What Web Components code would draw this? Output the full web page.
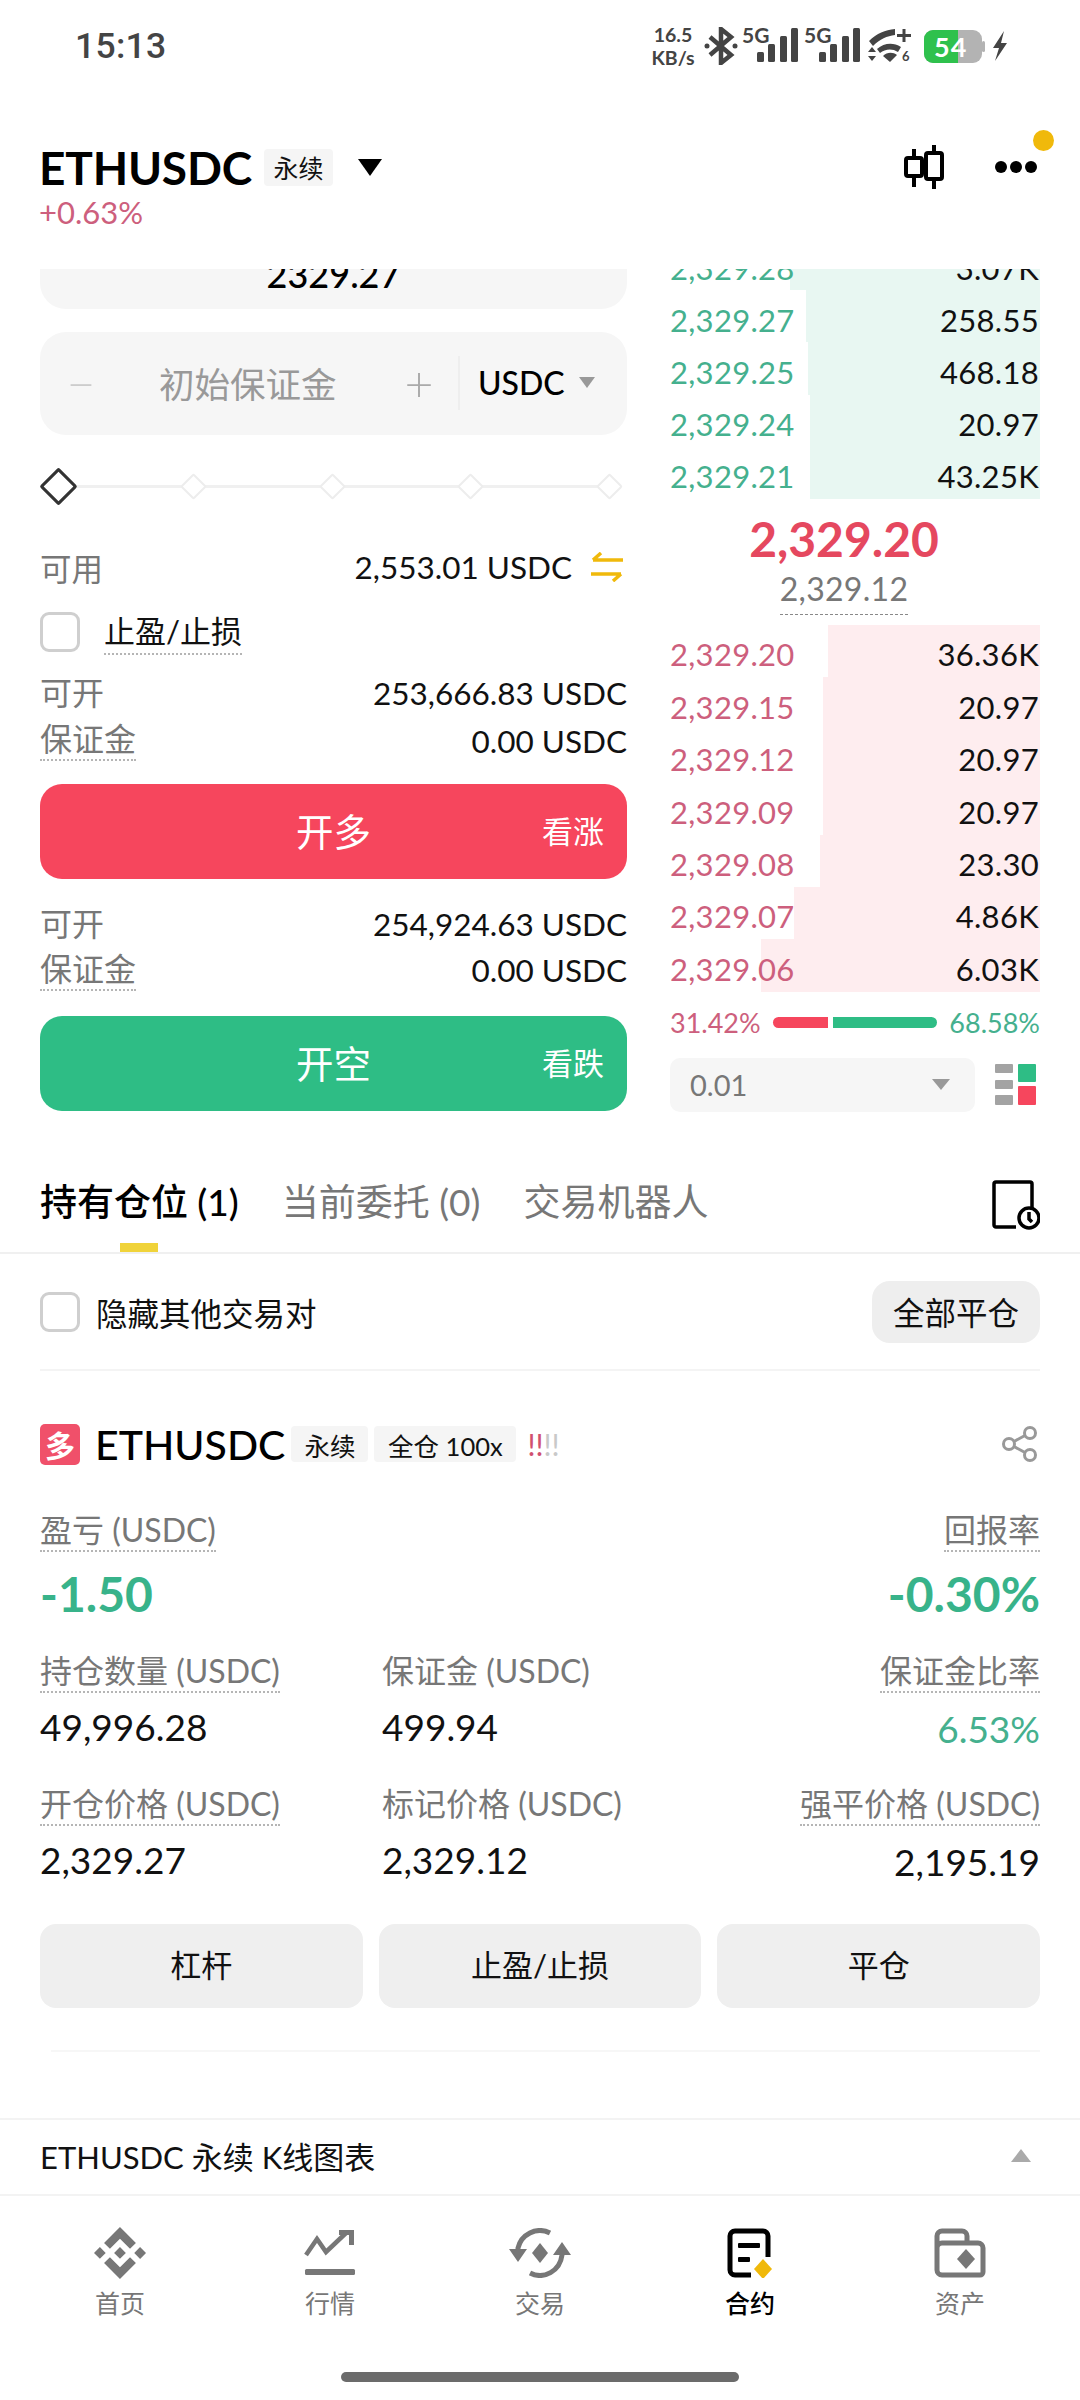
<!DOCTYPE html>
<html lang="zh">
<head>
<meta charset="utf-8">
<title>ETHUSDC</title>
<style>
  html, body { margin: 0; padding: 0; background: #fff; }
  body {
    width: 1080px; height: 2400px; overflow: hidden;
    font-family: Lato, "Noto Sans CJK SC", sans-serif;
    color: #000;
    --green: #2ebd85; --green-text: #45b08e; --red: #f6465d; --red-text: #cd5f7d;
    --grey: #777; --soft: #f5f5f5;
  }
</style>
</head>
<body>
<status-bar></status-bar>
<market-header></market-header>

<trade-panel>
  <order-form slot="form"></order-form>
  <order-book slot="book"></order-book>
</trade-panel>

<position-tabs></position-tabs>
<hide-row></hide-row>

<position-card>
  <stat-cell slot="a" label="盈亏 (USDC)" value="-1.50" tone="green" big></stat-cell>
  <stat-cell slot="c" label="回报率" value="-0.30%" tone="green" big right></stat-cell>
  <stat-cell slot="d" label="持仓数量 (USDC)" value="49,996.28"></stat-cell>
  <stat-cell slot="e" label="保证金 (USDC)" value="499.94" plain></stat-cell>
  <stat-cell slot="f" label="保证金比率" value="6.53%" tone="green" right></stat-cell>
  <stat-cell slot="g" label="开仓价格 (USDC)" value="2,329.27"></stat-cell>
  <stat-cell slot="h" label="标记价格 (USDC)" value="2,329.12" plain></stat-cell>
  <stat-cell slot="i" label="强平价格 (USDC)" value="2,195.19" right></stat-cell>
</position-card>

<chart-bar></chart-bar>

<bottom-nav>
  <nav-item label="首页">
    <svg width="52" height="52" viewBox="0 0 24 24" fill="#777"><path d="M16.624 13.9202l2.7175 2.7154-7.353 7.353-7.353-7.352 2.7175-2.7164 4.6355 4.6595 4.6356-4.6595zm4.6366-4.6366L24 12l-2.7154 2.7164L18.5682 12l2.6924-2.7164zm-9.272.001l2.7163 2.6914-2.7164 2.7174v-.001L9.2721 12l2.7164-2.7154zm-9.2722-.001L5.4088 12l-2.6914 2.6924L0 12l2.7164-2.7164zM11.9885.0115l7.353 7.329-2.7174 2.7154-4.6356-4.6356-4.6355 4.6595-2.7174-2.7154 7.353-7.353z"/></svg>
  </nav-item>
  <nav-item label="行情">
    <svg width="52" height="50" viewBox="0 0 52 50"><path d="M2 27L13 11l9 13L42 5" fill="none" stroke="#777" stroke-width="4.500"/><path d="M35 2h15v15h-5V7H35z" fill="#777"/><rect x="1" y="41" width="50" height="6" rx="1.5" fill="#777"/></svg>
  </nav-item>
  <nav-item label="交易">
    <svg width="64" height="50" viewBox="0 0 64 50"><path d="M32 15l8 10-8 10-8-10z" fill="#777"/><path d="M42 5C28-2 13 7 10 20v6M22 45c14 7 30-2 32-18v-7" fill="none" stroke="#777" stroke-width="5"/><path d="M1 21h18l-9 13zM45 27h18l-9-13z" fill="#777"/></svg>
  </nav-item>
  <nav-item label="合约" active>
    <svg width="46" height="50" viewBox="0 0 46 50"><path d="M24 47H8a5 5 0 0 1-5-5V8a5 5 0 0 1 5-5h28a5 5 0 0 1 5 5v21" fill="none" stroke="#000" stroke-width="5"/><rect x="11" y="15" width="22" height="5" rx="1" fill="#000"/><rect x="11" y="29" width="12" height="5" rx="1" fill="#000"/><path d="M36 31l9 10-9 10-9-10z" fill="#f0b90b"/></svg>
  </nav-item>
  <nav-item label="资产">
    <svg width="52" height="50" viewBox="0 0 52 50"><path d="M3 22V8a5 5 0 0 1 5-5h20a5 5 0 0 1 5 5v6M3 20a5 5 0 0 1 5-5h36a5 5 0 0 1 5 5v24a3 3 0 0 1-3 3H8a5 5 0 0 1-5-5z" fill="none" stroke="#777" stroke-width="5"/><path d="M32 21l9 10-9 10-9-10z" fill="#777"/></svg>
  </nav-item>
</bottom-nav>

<script>
// every element clones its own template into an open shadow root
function tpl(html) {
  var t = document.createElement("template");
  t.innerHTML = html;
  return t;
}

class Base extends HTMLElement {
  constructor() {
    super();
    this.attachShadow({ mode: "open" });
    this.shadowRoot.appendChild(this.constructor.template.content.cloneNode(true));
  }
  $(sel) { return this.shadowRoot.querySelector(sel); }
}

/* ---------- small leaf elements ---------- */

class DotLabel extends Base {}
DotLabel.template = tpl(`
<style>
  :host { display: inline-block; padding-bottom: 3px; border-bottom: 2px dotted #b5b5b5; line-height: 34px; }
</style><slot></slot>`);
customElements.define("dot-label", DotLabel);

class TagChip extends Base {}
TagChip.template = tpl(`
<style>
  :host { display: inline-flex; align-items: center; justify-content: center; height: 36px; padding: 0 10px; background: #f5f5f5; border-radius: 4px; font-size: 25.500px; color: #111; white-space: nowrap; }
</style><slot></slot>`);
customElements.define("tag-chip", TagChip);

class CheckBox extends Base {}
CheckBox.template = tpl(`
<style>
  :host { display: block; width: 40px; height: 40px; box-sizing: border-box; border: 3px solid #cfcfcf; border-radius: 9px; flex: none; }
</style>`);
customElements.define("check-box", CheckBox);

/* ---------- status bar ---------- */

class SignalMark extends Base {}
SignalMark.template = tpl(`
<style>
  :host { display: block; position: relative; width: 54px; height: 37px; }
  span { position: absolute; left: -1px; top: -3px; font-size: 21px; font-weight: 700; line-height: 20px; color: #444; }
  svg { position: absolute; left: 14px; top: 0; }
</style>
<span>5G</span>
<svg width="41" height="34" viewBox="0 0 41 34" fill="#444"><rect x="0" y="24" width="7" height="10" rx="1.5"/><rect x="11" y="16" width="7" height="18" rx="1.5"/><rect x="23" y="8" width="7" height="26" rx="1.5"/><rect x="34" y="0" width="7" height="34" rx="1.5"/></svg>`);
customElements.define("signal-mark", SignalMark);

class StatusBar extends Base {}
StatusBar.template = tpl(`
<style>
  :host { display: flex; align-items: center; height: 92px; box-sizing: border-box; padding: 0 72px 0 75px; color: #444; }
  .time { font-size: 35.500px; font-weight: 500; font-family: Roboto, sans-serif; letter-spacing: .3px; }
  .right { margin-left: auto; display: flex; align-items: center; }
  .speed { width: 44px; text-align: center; font-size: 19.500px; font-weight: 700; line-height: 23px; white-space: nowrap; margin-right: 9px; }
  .batt { position: relative; width: 62px; height: 33px; margin: 0 6px 0 12px; }
  .batt b { position: absolute; left: 10px; top: 0; line-height: 33px; font-size: 27px; font-weight: 700; color: #fff; letter-spacing: 1px; }
  .six { overflow: visible; margin-left: 9px; }
</style>
<div class="time">15:13</div>
<div class="right">
  <div class="speed">16.5<br>KB/s</div>
  <svg width="34" height="38" viewBox="0 0 34 38" fill="none" stroke="#444" stroke-width="4.5" style="margin-right:5px"><path d="M6 10l21 18-10 8V2l10 8L6 28"/><circle cx="3" cy="19" r="2.5" fill="#444" stroke="none"/><circle cx="31" cy="19" r="2.5" fill="#444" stroke="none"/></svg>
  <signal-mark></signal-mark>
  <signal-mark style="margin-left:8px"></signal-mark>
  <svg class="six" width="44" height="36" viewBox="0 0 44 36" fill="#444"><path d="M1 13C9 5 17 2 27 1v6C19 8 12 11 5 18z"/><path d="M9 21c7-6 16-7 24-2l-3 5c-6-4-13-3-18 1z"/><path d="M15 28c4-4 10-4 14-1l-7 7z"/><path d="M29 6h14v3H29zM34.500 1h3v13h-3z"/><path d="M0 24h8l-4-5zM0 28h8l-4 5z"/><text x="34" y="33" font-size="13" font-weight="700" font-family="Lato, sans-serif">6</text></svg>
  <div class="batt">
    <svg width="62" height="33" viewBox="0 0 62 33"><rect x="0" y="0" width="58" height="33" rx="9" fill="#b3b3b3"/><path d="M9 0h25v33H9a9 9 0 0 1-9-9V9a9 9 0 0 1 9-9z" fill="#2fc14d"/><rect x="58" y="11" width="3" height="11" rx="1.5" fill="#b3b3b3"/></svg>
    <b>54</b>
  </div>
  <svg width="16" height="30" viewBox="0 0 16 30" fill="#444"><path d="M12 0L1 17h6L3 30l12-18H9z"/></svg>
</div>`);
customElements.define("status-bar", StatusBar);

/* ---------- market header ---------- */

class MarketHeader extends Base {}
MarketHeader.template = tpl(`
<style>
  :host { display: block; height: 177px; box-sizing: border-box; padding: 50px 39px 0; position: relative; }
  .top { display: flex; align-items: center; height: 50px; }
  h1 { margin: 0; font-size: 46px; font-weight: 700; letter-spacing: -.2px; }
  tag-chip { margin-left: 12px; width: 69px; height: 37px; padding: 0; box-sizing: border-box; font-size: 25px; }
  .caret { margin-left: 25px; width: 0; height: 0; border-left: 12px solid transparent; border-right: 12px solid transparent; border-top: 17px solid #000; }
  .icons { margin-left: auto; display: flex; align-items: center; gap: 49px; margin-right: 3px; }
  .chg { margin-top: 3px; font-size: 31px; line-height: 34px; color: var(--red-text); }
  .dot { position: absolute; left: 1033px; top: 38px; width: 21px; height: 21px; border-radius: 50%; background: #f0b90b; }
</style>
<div class="top">
  <h1>ETHUSDC</h1><tag-chip>永续</tag-chip><span class="caret"></span>
  <div class="icons">
    <svg width="42" height="44" viewBox="0 0 42 44" fill="none" stroke="#000" stroke-width="4"><path d="M11 4v38M31 0v44"/><rect x="3" y="13" width="16" height="18" rx="2" fill="#fff"/><rect x="23" y="8" width="16" height="26" rx="2" fill="#fff"/></svg>
    <svg width="44" height="14" viewBox="0 0 44 14" fill="#000"><circle cx="7" cy="7" r="6"/><circle cx="22" cy="7" r="6"/><circle cx="37" cy="7" r="6"/></svg>
  </div>
</div>
<div class="chg">+0.63%</div>
<div class="dot"></div>`);
customElements.define("market-header", MarketHeader);

/* ---------- trade panel ---------- */

class TradePanel extends Base {}
TradePanel.template = tpl(`
<style>
  :host { display: flex; height: 871px; overflow: hidden; box-sizing: border-box; padding: 0 40px; gap: 41px; }
  ::slotted([slot=form]) { width: 587px; flex: none; }
  ::slotted([slot=book]) { width: 372px; flex: none; }
</style>
<slot name="form"></slot><slot name="book"></slot>`);
customElements.define("trade-panel", TradePanel);

class FormRow extends Base {
  connectedCallback() {
    var lab = this.getAttribute("label");
    this.$(".l").innerHTML = this.hasAttribute("dotted") ? "<dot-label>" + lab + "</dot-label>" : lab;
    this.$(".v").textContent = this.getAttribute("value");
  }
}
FormRow.template = tpl(`
<style>
  :host { display: flex; align-items: center; justify-content: space-between; height: 38px; font-size: 31.500px; white-space: nowrap; }
  .l { color: var(--grey); line-height: 38px; font-size: 32px; }
  .v { color: #111; }
  dot-label { margin-top: 2px; }
</style>
<div class="l"></div><div class="v"></div><slot></slot>`);
customElements.define("form-row", FormRow);

class ActionButton extends Base {
  connectedCallback() {
    this.$(".m").textContent = this.getAttribute("main");
    this.$(".s").textContent = this.getAttribute("side");
    this.style.setProperty("--bg", this.getAttribute("color"));
  }
}
ActionButton.template = tpl(`
<style>
  :host { display: grid; grid-template-columns: 1fr auto 1fr; align-items: center; height: 95px; box-sizing: border-box; border-radius: 22px; background: var(--bg); color: #fff; padding: 0 23px 5px; }
  .m { grid-column: 2; font-size: 37.500px; }
  .s { grid-column: 3; justify-self: end; font-size: 31px; }
</style>
<div class="m"></div><div class="s"></div>`);
customElements.define("action-button", ActionButton);

class LeverSlider extends Base {}
LeverSlider.template = tpl(`
<style>
  :host { display: flex; align-items: center; height: 40px; }
  i { display: block; flex: 1; height: 3px; background: #f0f0f0; margin: 0 -2px; }
  i.short { flex: .9; }
  b { display: block; flex: none; width: 15px; height: 15px; transform: rotate(45deg); margin: 0 3px; background: #fff; border: 2px solid #ededed; border-radius: 2px; }
  b.on { width: 21px; height: 21px; margin: 0 7px 0 5px; border: 3.5px solid #333; border-radius: 2px; }
  b:last-child { margin-right: 8px; }
</style>
<b class="on"></b><i class="short"></i><b></b><i></i><b></b><i></i><b></b><i></i><b></b>`);
customElements.define("lever-slider", LeverSlider);

class OrderForm extends Base {}
OrderForm.template = tpl(`
<style>
  :host { display: block; }
  .box { background: #f6f6f6; border-radius: 26px; }
  .price { height: 100px; margin-top: -60px; box-sizing: border-box; padding-bottom: 17px; display: flex; align-items: flex-end; justify-content: center; font-size: 36px; line-height: 36px; font-weight: 500; }
  .margin { margin-top: 23px; height: 103px; box-sizing: border-box; padding-bottom: 2px; display: flex; align-items: center; }
  .margin .sign { width: 40px; text-align: center; color: #aaa; font-size: 50px; font-weight: 300; line-height: 44px; }
  .margin .minus { margin-left: 21px; color: #ccc; }
  .margin .ph { width: 178px; margin-left: 58px; font-size: 35.500px; color: #999; white-space: nowrap; }
  .margin .plus { margin-left: 62px; }
  .margin .sep { width: 2px; height: 54px; background: #eeeeee; margin: 0 18px 0 19px; }
  .margin .unit { font-size: 32px; font-weight: 500; }
  .margin .dn { margin-left: 14px; border-left: 8px solid transparent; border-right: 8px solid transparent; border-top: 11px solid #999; }
  lever-slider { margin-top: 31px; }
  .avail { margin-top: 41px; height: 40px; }
  .avail svg { margin: 0 3px 0 18px; }
  .avail .val { display: flex; align-items: center; color: #111; }
  .tp { display: flex; align-items: center; gap: 24px; margin-top: 21px; font-size: 31px; color: #111; }
  .tp dot-label { line-height: 38px; margin-top: 4px; }
  form-row.first { margin-top: 19px; }
  form-row.first.next { margin-top: 25.500px; }
  form-row.second { margin-top: 9.500px; }
  form-row.second.next { margin-top: 8.500px; }
  action-button { margin-top: 24.500px; }
  action-button.next { margin-top: 27px; }
  .row { display: flex; justify-content: space-between; align-items: center; font-size: 31.500px; white-space: nowrap; }
  .row .lab { color: var(--grey); }
</style>
<div class="box price">2329.27</div>
<div class="box margin">
  <span class="sign minus">−</span>
  <span class="ph">初始保证金</span>
  <span class="sign plus">+</span>
  <span class="sep"></span>
  <span class="unit">USDC</span>
  <span class="dn"></span>
</div>
<lever-slider></lever-slider>
<div class="row avail">
  <span class="lab">可用</span>
  <span class="val">2,553.01 USDC
    <svg width="34" height="30" viewBox="0 0 34 30" fill="none" stroke="#f0b90b" stroke-width="3.5"><path d="M33 8H3M11 1L3 8M1 22h30M23 29l8-7"/></svg>
  </span>
</div>
<div class="tp"><check-box></check-box><dot-label>止盈/止损</dot-label></div>
<form-row class="first" label="可开" value="253,666.83 USDC"></form-row>
<form-row class="second" label="保证金" value="0.00 USDC" dotted></form-row>
<action-button main="开多" side="看涨" color="#f6465d"></action-button>
<form-row class="first next" label="可开" value="254,924.63 USDC"></form-row>
<form-row class="second next" label="保证金" value="0.00 USDC" dotted></form-row>
<action-button class="next" main="开空" side="看跌" color="#2ebd85"></action-button>`);
customElements.define("order-form", OrderForm);

class BookRow extends Base {
  connectedCallback() {
    var side = this.getAttribute("side");
    this.$(".p").textContent = this.getAttribute("price");
    this.$(".q").textContent = this.getAttribute("qty");
    this.style.setProperty("--from", this.getAttribute("from") + "px");
    this.style.setProperty("--c", side == "ask" ? "#feedef" : "#e8f7f2");
    this.style.setProperty("--t", side == "ask" ? "var(--red-text)" : "var(--green-text)");
  }
}
BookRow.template = tpl(`
<style>
  :host { display: flex; justify-content: space-between; box-sizing: border-box; height: var(--rh, 52px); padding: 10.500px 1px 0 2px; font-size: 31px; line-height: 38px; background: linear-gradient(to right, transparent var(--from), var(--c) var(--from)); letter-spacing: .3px; }
  .p { color: var(--t); }
  .q { color: #111; }
</style>
<span class="p"></span><span class="q"></span>`);
customElements.define("book-row", BookRow);

class OrderBook extends Base {}
OrderBook.template = tpl(`
<style>
  :host { display: block; }
  .bids { margin-top: -31px; --rh: 52.200px; }
  .asks { --rh: 52.400px; }
  .mid { height: 126px; box-sizing: border-box; padding: 17px 20px 0 0; display: flex; flex-direction: column; align-items: center; }
  .last { font-size: 48px; line-height: 46px; font-weight: 700; color: #e5485f; }
  .mark { margin-top: 10px; font-size: 32px; line-height: 34px; color: #777; padding-bottom: 8px; border-bottom: 1px dashed #888; letter-spacing: .3px; }
  .ratio { margin-top: 9px; height: 44px; display: flex; align-items: center; font-size: 27px; padding: 0 0 0 2px; }
  .ratio .a { color: var(--red-text); }
  .ratio .b { color: var(--green-text); }
  .bar { margin: 0 12px; flex: 1; display: flex; gap: 5px; height: 11px; }
  .bar i { display: block; }
  .bar .r { width: 55px; background: var(--red); border-radius: 6px 0 0 6px; }
  .bar .g { flex: 1; background: var(--green); border-radius: 0 6px 6px 0; }
  .tick { margin-top: 13px; display: flex; align-items: center; justify-content: space-between; padding: 0 3px 0 2px; }
  .sel { width: 305px; height: 54px; box-sizing: border-box; padding: 0 25px 0 20px; background: #f6f6f6; border-radius: 10px; display: flex; align-items: center; justify-content: space-between; font-size: 29px; color: #777; }
  .sel i { border-left: 9px solid transparent; border-right: 9px solid transparent; border-top: 11px solid #999; }
</style>
<div class="bids">
  <book-row side="bid" price="2,329.28" qty="3.07K" from="122"></book-row>
  <book-row side="bid" price="2,329.27" qty="258.55" from="138"></book-row>
  <book-row side="bid" price="2,329.25" qty="468.18" from="140"></book-row>
  <book-row side="bid" price="2,329.24" qty="20.97" from="142"></book-row>
  <book-row side="bid" price="2,329.21" qty="43.25K" from="142"></book-row>
</div>
<div class="mid">
  <div class="last">2,329.20</div>
  <div class="mark">2,329.12</div>
</div>
<div class="asks">
  <book-row side="ask" price="2,329.20" qty="36.36K" from="160"></book-row>
  <book-row side="ask" price="2,329.15" qty="20.97" from="155"></book-row>
  <book-row side="ask" price="2,329.12" qty="20.97" from="155"></book-row>
  <book-row side="ask" price="2,329.09" qty="20.97" from="155"></book-row>
  <book-row side="ask" price="2,329.08" qty="23.30" from="152"></book-row>
  <book-row side="ask" price="2,329.07" qty="4.86K" from="126"></book-row>
  <book-row side="ask" price="2,329.06" qty="6.03K" from="93"></book-row>
</div>
<div class="ratio"><span class="a">31.42%</span><div class="bar"><i class="r"></i><i class="g"></i></div><span class="b">68.58%</span></div>
<div class="tick">
  <div class="sel"><span>0.01</span><i></i></div>
  <svg width="42" height="42" viewBox="0 0 42 42"><g fill="#a3a3a3"><rect x="0" y="0" width="18" height="9" rx="1"/><rect x="0" y="16" width="18" height="9" rx="1"/><rect x="0" y="31" width="18" height="10" rx="1"/></g><rect x="23" y="0" width="18" height="18" rx="1" fill="#2ebd85"/><rect x="23" y="22" width="18" height="19" rx="1" fill="#f6465d"/></svg>
</div>`);
customElements.define("order-book", OrderBook);

/* ---------- tabs + filter ---------- */

class PositionTabs extends Base {}
PositionTabs.template = tpl(`
<style>
  :host { display: flex; height: 114px; box-sizing: border-box; padding: 41px 40px 0; align-items: flex-start; border-bottom: 2px solid #f0f0f0; gap: 43px; }
  .t { position: relative; font-size: 37px; line-height: 42px; color: var(--grey); height: 71px; white-space: nowrap; }
  .t.on { color: #000; font-weight: 500; }
  .t.on::after { content: ""; position: absolute; left: 50%; margin-left: -19px; bottom: 0; width: 38px; height: 9px; background: #f0d33a; }
  svg { margin: -1px 0 0 auto; flex: none; }
</style>
<div class="t on">持有仓位 (1)</div>
<div class="t">当前委托 (0)</div>
<div class="t">交易机器人</div>
<svg width="48" height="50" viewBox="0 0 48 50" fill="none" stroke="#000" stroke-width="3.500"><path d="M24 47H4a2 2 0 0 1-2-2V4a2 2 0 0 1 2-2h34a2 2 0 0 1 2 2v26"/><circle cx="37" cy="38" r="10"/><path d="M37 32v7l3 3"/></svg>`);
customElements.define("position-tabs", PositionTabs);

class HideRow extends Base {}
HideRow.template = tpl(`
<style>
  :host { display: block; padding: 0 40px; }
  .in { display: flex; align-items: center; height: 117px; box-sizing: border-box; padding-top: 28px; padding-bottom: 27px; border-bottom: 2px solid #f4f4f4; font-size: 31.500px; color: #111; }
  span { margin-left: 16px; }
  button { margin-left: auto; width: 168px; height: 62px; border: 0; border-radius: 18px; background: #eeeeee; font: inherit; color: #111; padding: 0 0 3px; }
</style>
<div class="in"><check-box></check-box><span>隐藏其他交易对</span><button>全部平仓</button></div>`);
customElements.define("hide-row", HideRow);

/* ---------- position card ---------- */

class StatCell extends Base {
  connectedCallback() {
    this.$(".l").textContent = this.getAttribute("label");
    this.$(".v").textContent = this.getAttribute("value");
    if (this.getAttribute("tone") == "green") this.$(".v").classList.add("g");
    if (this.hasAttribute("big")) this.$(".v").classList.add("big");
    if (this.hasAttribute("right")) this.classList.add("right");
    if (this.hasAttribute("plain")) this.$(".l").classList.add("plain");
  }
}
StatCell.template = tpl(`
<style>
  :host { display: flex; flex-direction: column; align-items: flex-start; font-size: 32px; }
  :host(.right) { align-items: flex-end; }
  :host(.right) .v { margin-top: 13px; }
  .l { color: var(--grey); white-space: nowrap; }
  .l.plain { border-bottom-color: transparent; }
  .v { margin-top: 11px; font-size: 37px; line-height: 46px; color: #111; white-space: nowrap; }
  .v.g { color: var(--green-text); }
  :host(.right) .v.big, .v.big { margin-top: 17px; font-size: 48px; line-height: 50px; font-weight: 700; color: #38b38a; }
</style>
<dot-label class="l"></dot-label><div class="v"></div>`);
customElements.define("stat-cell", StatCell);

class PositionCard extends Base {}
PositionCard.template = tpl(`
<style>
  :host { display: block; padding: 0 40px; }
  .head { display: flex; align-items: center; height: 42px; margin-top: 52px; }
  .side { width: 40px; height: 41px; border-radius: 5px; background: #f0506a; color: #fff; font-size: 30px; font-weight: 700; display: flex; align-items: center; justify-content: center; flex: none; }
  .name { margin-left: 15px; font-size: 41px; font-weight: 500; }
  tag-chip { margin-left: 6px; }
  .warn { margin-left: 11px; font-size: 30px; font-weight: 400; color: #c9c9c9; }
  .warn b { color: #d0506f; font-weight: 400; }
  .share { margin-left: auto; margin-right: 2px; }
  .grid { margin-top: 48px; display: grid; grid-template-columns: 342px 1fr auto; row-gap: 35px; }
  .btns { margin-top: 38.500px; display: flex; gap: 16px; }
  .btns div { flex: 1; height: 84px; box-sizing: border-box; padding-bottom: 4px; background: #efefef; border-radius: 16px; display: flex; align-items: center; justify-content: center; font-size: 31px; color: #111; }
  .rule { margin: 42px 0 0 11px; height: 2px; background: #f7f7f7; }
</style>
<div class="head">
  <div class="side">多</div>
  <div class="name">ETHUSDC</div>
  <tag-chip style="width:77px;padding:0;box-sizing:border-box">永续</tag-chip>
  <tag-chip style="width:142px;padding:0;box-sizing:border-box">全仓 100x</tag-chip>
  <div class="warn"><b>!!</b>!!</div>
  <svg class="share" width="36" height="36" viewBox="0 0 36 36" fill="none" stroke="#999" stroke-width="3"><circle cx="28" cy="7" r="5.500"/><circle cx="7" cy="18" r="5.500"/><circle cx="28" cy="29" r="5.500"/><path d="M12 15.500l11-6M12 20.500l11 6"/></svg>
</div>
<div class="grid">
  <slot name="a"></slot><div></div><slot name="c"></slot>
  <slot name="d"></slot><slot name="e"></slot><slot name="f"></slot>
  <slot name="g"></slot><slot name="h"></slot><slot name="i"></slot>
</div>
<div class="btns"><div>杠杆</div><div>止盈/止损</div><div>平仓</div></div>
<div class="rule"></div>`);
customElements.define("position-card", PositionCard);

/* ---------- footer ---------- */

class ChartBar extends Base {}
ChartBar.template = tpl(`
<style>
  :host { display: flex; align-items: center; justify-content: space-between; height: 78px; margin-top: 66px; box-sizing: border-box; padding: 0 40px 3px; border-top: 2px solid #f3f3f3; border-bottom: 2px solid #f3f3f3; font-size: 31px; color: #111; }
  i { margin-right: 9px; border-left: 10px solid transparent; border-right: 10px solid transparent; border-bottom: 13px solid #aaa; }
</style>
<span>ETHUSDC 永续 K线图表</span><i></i>`);
customElements.define("chart-bar", ChartBar);

class NavItem extends Base {
  connectedCallback() {
    this.$("span").textContent = this.getAttribute("label");
    if (this.hasAttribute("active")) this.$("span").classList.add("on");
  }
}
NavItem.template = tpl(`
<style>
  :host { display: flex; flex-direction: column; align-items: center; width: 210px; }
  .ic { height: 52px; display: flex; align-items: center; justify-content: center; }
  span { margin-top: 7px; font-size: 25px; line-height: 34px; color: var(--grey); }
  span.on { color: #000; font-weight: 500; }
</style>
<div class="ic"><slot></slot></div><span></span>`);
customElements.define("nav-item", NavItem);

class BottomNav extends Base {}
BottomNav.template = tpl(`
<style>
  :host { display: block; }
  .items { display: flex; justify-content: center; padding-top: 31px; }
  .bar { width: 398px; height: 10px; margin: 52px auto 0; background: #6b6b6b; border-radius: 5px; }
</style>
<div class="items"><slot></slot></div>
<div class="bar"></div>`);
customElements.define("bottom-nav", BottomNav);
</script>
</body>
</html>
